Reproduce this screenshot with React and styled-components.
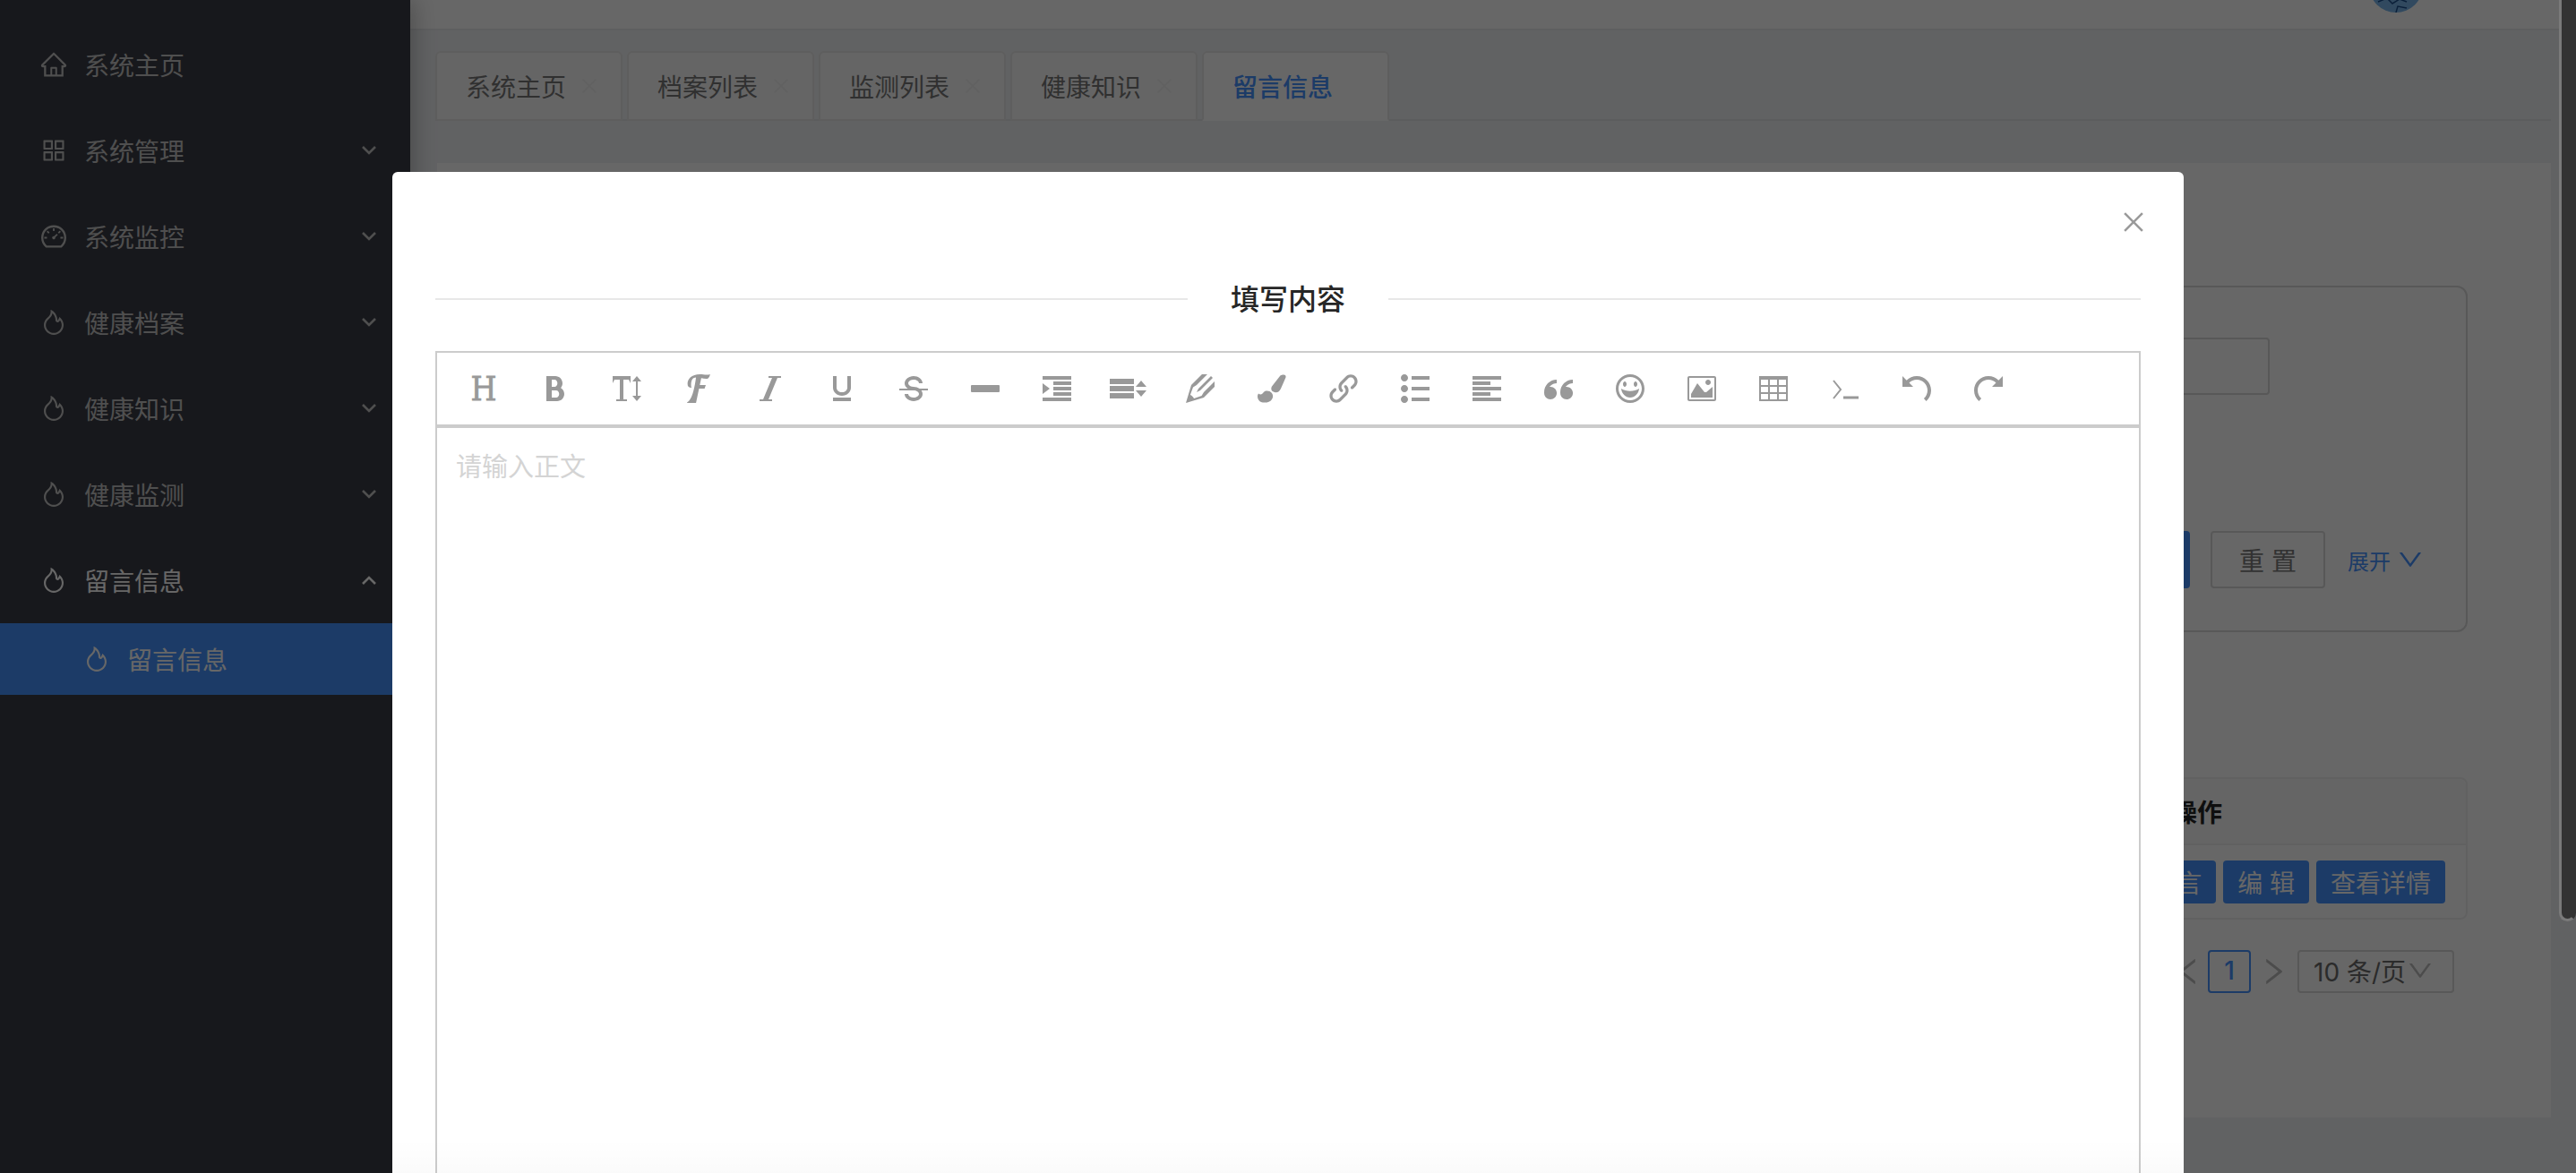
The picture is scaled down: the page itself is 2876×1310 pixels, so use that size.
import React from "react";
import styled, { createGlobalStyle } from "styled-components";
import {
  AiOutlineHome, AiOutlineAppstore, AiOutlineDashboard, AiOutlineFire,
  AiOutlineClose, AiOutlineDown, AiOutlineLeft, AiOutlineRight,
} from "react-icons/ai";
import {
  ImBold, ImTextHeight, ImFont, ImItalic, ImUnderline, ImStrikethrough, ImIndentIncrease,
  ImPencil2, ImLink, ImList2, ImParagraphLeft, ImQuotesLeft, ImHappy, ImImage, ImTable2, ImUndo, ImRedo,
} from "react-icons/im";

const FONT = `"Liberation Sans", "Noto Sans CJK SC", sans-serif`;

const Global = createGlobalStyle`
  html, body { margin: 0; height: 1310px; overflow: hidden; background: #f0f2f5; }
  #root { height: 1310px; }
  * { box-sizing: border-box; }
  body { font-family: ${FONT}; font-size: 28px; }
`;

const Page = styled.div`display: flex; height: 1310px; overflow: hidden;`;

const Sidebar = styled.aside`
  width: 458px; flex: none; height: 100%; background: #3b3c45; padding-top: 32px;
  display: flex; flex-direction: column; gap: 16px;
  box-shadow: 4px 0 24px rgba(0,0,0,.25); position: relative; z-index: 1;
`;
const NavRow = styled.div`
  height: 80px; display: flex; align-items: center; gap: 18px; padding: 0 38px 0 44px;
  color: ${p => (p.$open ? "#fff" : "#c4c4c4")}; font-size: 28px; flex: none;
`;
const SubRow = styled.div`
  height: 80px; margin-top: -8px; display: flex; align-items: center; gap: 18px; padding-left: 92px;
  background: #4593ff; color: #fff; flex: none;
`;
const Arrow = styled.svg`margin-left: auto; width: 16px; height: 12px; fill: none; stroke: currentColor; stroke-width: 2.6;`;

const Main = styled.div`flex: 1; min-width: 0; height: 100%; display: flex; flex-direction: column;`;
const Header = styled.header`
  height: 32px; flex: none; background: #fff; display: flex; justify-content: flex-end; align-items: flex-end;
  padding: 0 171px 18px 0; box-shadow: 0 1px 3px rgba(0,0,0,.06);
`;
const Avatar = styled.svg`width: 60px; height: 60px; flex: none;`;

const TabBar = styled.nav`
  margin: 25px 28px 0 28px; height: 78px; display: flex; gap: 5px; flex: none;
  border-bottom: 2px solid #e4e6e9;
`;
const Tab = styled.div`
  width: 209px; height: 78px; display: flex; align-items: center; padding-left: 32px;
  border: 2px solid #e8e8e8; border-radius: 6px 6px 0 0; flex: none;
  background: ${p => (p.$active ? "#fff" : "#fafafa")};
  border-bottom-color: ${p => (p.$active ? "#fff" : "#e8e8e8")};
  color: ${p => (p.$active ? "#4593ff" : "#787878")};
  font-weight: ${p => (p.$active ? 500 : 400)};
  svg { margin-left: 14px; color: #f0f0f0; visibility: ${p => (p.$active ? "hidden" : "visible")}; }
`;

const Panel = styled.section`
  margin: 47px 28px 62px 30px; flex: 1; min-height: 0; background: #fff;
  padding: 137px 93px 0 93px; display: flex; flex-direction: column;
`;
const SearchCard = styled.div`
  height: 387px; border: 2px solid #d9d9d9; border-radius: 12px; padding: 56px 50px 0 0; flex: none;
  display: flex; flex-direction: column; justify-content: space-between; padding-bottom: 47px;
`;
const InputRow = styled.div`display: flex; justify-content: flex-end; padding-right: 169px;`;
const TextInput = styled.div`width: 320px; height: 64px; border: 2px solid #d9d9d9; border-radius: 4px;`;
const ActionRow = styled.div`display: flex; justify-content: flex-end; align-items: center;`;
const PrimaryBtn = styled.div`width: 128px; height: 64px; background: #4593ff; border-radius: 4px;`;
const ResetBtn = styled.div`
  width: 128px; height: 64px; margin-left: 23px; border: 2px solid #d9d9d9; border-radius: 4px;
  display: flex; align-items: center; justify-content: center; color: #7c7c7c; white-space: pre;
`;
const Expand = styled.div`
  margin-left: 25px; width: 82px; display: flex; align-items: center; justify-content: space-between;
  font-size: 24px; color: #4593ff; white-space: nowrap;
  svg { flex: none; margin-right: -4px; }
`;

const Table = styled.div`
  margin-top: 162px; height: 159px; border: 2px solid #f0f0f0; border-radius: 8px; flex: none;
  display: flex; flex-direction: column;
`;
const TableHead = styled.div`
  height: 74px; background: #fafafa; border-bottom: 2px solid #f0f0f0; color: #262626; font-weight: 600;
  display: flex; align-items: center; justify-content: flex-end; padding-right: 272px; border-radius: 8px 8px 0 0;
`;
const TableCell = styled.div`
  flex: 1; display: flex; justify-content: flex-end; align-items: center; gap: 8px; padding-right: 23px;
`;
const RowBtn = styled.div`
  height: 48px; padding: 0 16px; background: #4593ff; color: #fff; border-radius: 4px; white-space: pre;
  display: flex; align-items: center;
`;
const Pager = styled.div`
  margin-top: 34px; padding-right: 15px; display: flex; justify-content: flex-end; align-items: center; color: #bcbcbc;
  font-family: Inter, "Noto Sans CJK SC", sans-serif;
`;
const PageNum = styled.div`
  width: 48px; height: 48px; margin: 0 6px 0 3px; border: 2px solid #4593ff; border-radius: 4px; color: #4593ff;
  display: flex; align-items: center; justify-content: center; font-weight: 500; padding-bottom: 2px;
`;
const PageSize = styled.div`
  width: 175px; height: 48px; margin-left: 8px; border: 2px solid #d9d9d9; border-radius: 4px; color: #6a6a6a;
  display: flex; align-items: center; padding: 0 0 2px 16px; white-space: pre;
  svg { color: #bcbcbc; flex: none; }
`;

const Overlay = styled.div`position: fixed; inset: 0; background: rgba(0,0,0,.595); z-index: 10;`;
const ModalWrap = styled.div`
  position: fixed; inset: 0; z-index: 11; display: flex; justify-content: center; padding-top: 192px; overflow: hidden;
`;
const Modal = styled.div`
  position: relative; width: 2000px; height: 1400px; flex: none; background: #fff; border-radius: 6px;
  padding: 120px 48px 0;
  &::after {
    content: ""; position: absolute; left: 0; right: 0; top: 1080px; height: 40px;
    background: linear-gradient(rgba(0,0,0,0), rgba(0,0,0,.02)); pointer-events: none;
  }
`;
const CloseBtn = styled.div`
  position: absolute; top: 44px; right: 44px; width: 24px; height: 24px; color: #9a9a9a;
  display: flex; align-items: center; justify-content: center;
  svg { flex: none; }
`;
const DividerTitle = styled.div`
  display: flex; align-items: center; height: 44px; font-size: 32px; font-weight: 500; color: #262626;
  &::before, &::after { content: ""; flex: 1; height: 2px; background: #e8e8e8; }
  span { padding: 0 48px 4px; }
`;
const Editor = styled.div`margin-top: 36px;`;
const Toolbar = styled.div`
  height: 84px; border: 2px solid #ccc; display: flex; align-items: center; padding-left: 12px; color: #999;
`;
const ToolItem = styled.div`
  width: 80px; height: 80px; flex: none; display: flex; align-items: center; justify-content: center;
`;
const HeadingGlyph = styled.span`
  font-family: "DejaVu Serif", serif; font-size: 37px; line-height: 1; color: #999;
  -webkit-text-stroke: .8px #999; display: inline-block; transform: scaleX(.9);
`;
const TextArea = styled.div`
  height: 1000px; border: 2px solid #ccc; padding: 22px 21px; color: #d4d4d4; line-height: 44px; font-size: 29px;
`;

const Scrollbar = styled.div`
  position: fixed; z-index: 20; top: -20px; right: 0; width: 19px; height: 1049px;
  background: #333; border: 3px solid #7a7a7a; border-right-color: #333; border-radius: 0 0 10px 10px;
`;

const Chevron = ({ up }) => (
  <Arrow viewBox="0 0 16 12">
    <polyline points={up ? "1,10 8,3 15,10" : "1,2 8,9 15,2"} />
  </Arrow>
);

const HrIcon = () => (
  <svg width="32" height="32" viewBox="0 0 32 32" fill="currentColor"><rect x="0" y="12" width="32" height="8" rx="1" /></svg>
);
const LineHeightIcon = () => (
  <svg width="42" height="24" viewBox="0 0 42 24" fill="currentColor">
    <rect x="0" y="1" width="27" height="6" /><rect x="0" y="9" width="27" height="6" /><rect x="0" y="17" width="27" height="6" />
    <polygon points="35,3 41,10 29,10" /><polygon points="35,21 41,14 29,14" />
  </svg>
);
const BrushIcon = () => (
  <svg width="34" height="32" viewBox="0 0 34 32" fill="currentColor">
    <path d="M29 .5c2.500-.5 4 .7 3.500 3L27 16c-1.500 3.500-4 4.700-7 4-3.500-.8-4.500-3.500-3-6.500L26 2c.8-1 2-1.300 3-1.500z" />
    <path d="M9 19c3-1 6-.3 8 2 1.500 2 1.500 5 0 7-2 3-6 4-10 3.500-3.500-.4-6-3-6-7 0-1 .3-2 1-3 1 1 3 1.200 4 .5 1-.7 1.800-2.200 3-3z" />
  </svg>
);
const TerminalIcon = () => (
  <svg width="32" height="32" viewBox="0 0 32 32" fill="none" stroke="currentColor">
    <polyline points="3,7 11,17 3,27" strokeWidth="2" /><line x1="14" y1="26" x2="31" y2="26" strokeWidth="3" />
  </svg>
);

const tools = [
  <HeadingGlyph>H</HeadingGlyph>, <ImBold size={32} />, <ImTextHeight size={32} />, <ImFont size={32} />, <ImItalic size={32} />,
  <ImUnderline size={32} />, <ImStrikethrough size={32} />, <HrIcon />, <ImIndentIncrease size={32} />, <LineHeightIcon />,
  <ImPencil2 size={32} />, <BrushIcon />, <ImLink size={32} />, <ImList2 size={32} />, <ImParagraphLeft size={32} />,
  <ImQuotesLeft size={32} />, <ImHappy size={32} />, <ImImage size={32} />, <ImTable2 size={32} />, <TerminalIcon />,
  <ImUndo size={32} />, <ImRedo size={32} />,
];

const nav = [
  { label: "系统主页", Icon: AiOutlineHome },
  { label: "系统管理", Icon: AiOutlineAppstore, arrow: true },
  { label: "系统监控", Icon: AiOutlineDashboard, arrow: true },
  { label: "健康档案", Icon: AiOutlineFire, arrow: true },
  { label: "健康知识", Icon: AiOutlineFire, arrow: true },
  { label: "健康监测", Icon: AiOutlineFire, arrow: true },
  { label: "留言信息", Icon: AiOutlineFire, arrow: true, open: true },
];
const tabs = ["系统主页", "档案列表", "监测列表", "健康知识", "留言信息"];

export default function App() {
  return (
    <>
      <Global />
      <Page>
        <Sidebar>
          {nav.map(({ label, Icon, arrow, open }) => (
            <NavRow key={label} $open={open}>
              <Icon size={32} />
              <span>{label}</span>
              {arrow && <Chevron up={open} />}
            </NavRow>
          ))}
          <SubRow><AiOutlineFire size={32} /><span>留言信息</span></SubRow>
        </Sidebar>
        <Main>
          <Header>
            <Avatar viewBox="0 0 60 60">
              <circle cx="30" cy="30" r="30" fill="#7ab6ea" />
              <path d="M10 48 L20 44 L26 50 L34 45 L42 48 M30 60 L32 53 L42 55" stroke="#1d4f8f" strokeWidth="1.500" fill="none" />
            </Avatar>
          </Header>
          <TabBar>
            {tabs.map((t, i) => (
              <Tab key={t} $active={i === 4}>
                {t}
                <AiOutlineClose size={24} />
              </Tab>
            ))}
          </TabBar>
          <Panel>
            <SearchCard>
              <InputRow><TextInput /></InputRow>
              <ActionRow>
                <PrimaryBtn />
                <ResetBtn>重 置</ResetBtn>
                <Expand>展开<AiOutlineDown size={32} /></Expand>
              </ActionRow>
            </SearchCard>
            <Table>
              <TableHead>操作</TableHead>
              <TableCell>
                <RowBtn>留 言</RowBtn>
                <RowBtn>编 辑</RowBtn>
                <RowBtn>查看详情</RowBtn>
              </TableCell>
            </Table>
            <Pager>
              <AiOutlineLeft size={38} />
              <PageNum>1</PageNum>
              <AiOutlineRight size={38} />
              <PageSize>10 条/页<AiOutlineDown size={32} /></PageSize>
            </Pager>
          </Panel>
        </Main>
      </Page>
      <Overlay />
      <ModalWrap>
        <Modal>
          <CloseBtn><AiOutlineClose size={32} /></CloseBtn>
          <DividerTitle><span>填写内容</span></DividerTitle>
          <Editor>
            <Toolbar>
              {tools.map((icon, i) => <ToolItem key={i}>{icon}</ToolItem>)}
            </Toolbar>
            <TextArea>请输入正文</TextArea>
          </Editor>
        </Modal>
      </ModalWrap>
      <Scrollbar />
    </>
  );
}
